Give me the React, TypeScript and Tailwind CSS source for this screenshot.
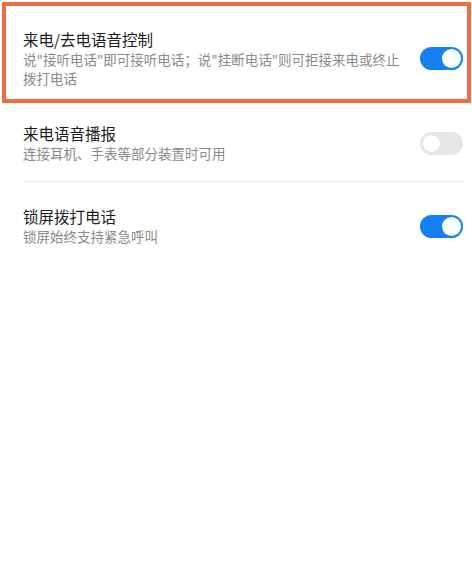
import React from "react";

type Row = {
  title: string;
  desc: string;
  on: boolean;
};

function Toggle({ on }: { on: boolean }) {
  return (
    <div
      className={
        on
          ? "flex h-[23px] w-[43px] shrink-0 items-center justify-end rounded-full bg-[#1580f2] px-[2px]"
          : "flex h-[23px] w-[43px] shrink-0 items-center justify-start rounded-full bg-[#e6e6e6] px-[2px]"
      }
    >
      <div
        className={
          on
            ? "h-[19px] w-[19px] rounded-full bg-white"
            : "h-[19px] w-[19px] rounded-full border border-[#e0e0e0] bg-white"
        }
      />
    </div>
  );
}

function SettingRow({ row }: { row: Row }) {
  return (
    <div className="flex items-center gap-5">
      <div className="flex-1">
        <p className="text-[15.5px] leading-[21px] text-[#1c1c1c]">{row.title}</p>
        <p className="text-[13.5px] leading-[19px] text-[#8a8a8a]">{row.desc}</p>
      </div>
      <Toggle on={row.on} />
    </div>
  );
}

export default function App() {
  return (
    <div
      className="min-h-[575px] w-full bg-white"
      style={{ fontFamily: '"Noto Sans CJK SC", "Noto Sans", sans-serif' }}
    >
      <div className="ml-[2px] mr-[1px] mt-[2px] border-4 border-[#ef6c3e] pb-[11px] pl-[17px] pr-[4px] pt-[23px]">
        <SettingRow
          row={{
            title: "来电/去电语音控制",
            desc: '说"接听电话"即可接听电话；说"挂断电话"则可拒接来电或终止拨打电话',
            on: true,
          }}
        />
      </div>
      <div className="pl-[23px] pr-[9px] pt-5 pb-[18px]">
        <SettingRow
          row={{
            title: "来电语音播报",
            desc: "连接耳机、手表等部分装置时可用",
            on: false,
          }}
        />
      </div>
      <div className="ml-[23px] mr-2 h-px bg-[#ececec]" />
      <div className="pl-[23px] pr-[9px] pt-6">
        <SettingRow
          row={{
            title: "锁屏拨打电话",
            desc: "锁屏始终支持紧急呼叫",
            on: true,
          }}
        />
      </div>
    </div>
  );
}
